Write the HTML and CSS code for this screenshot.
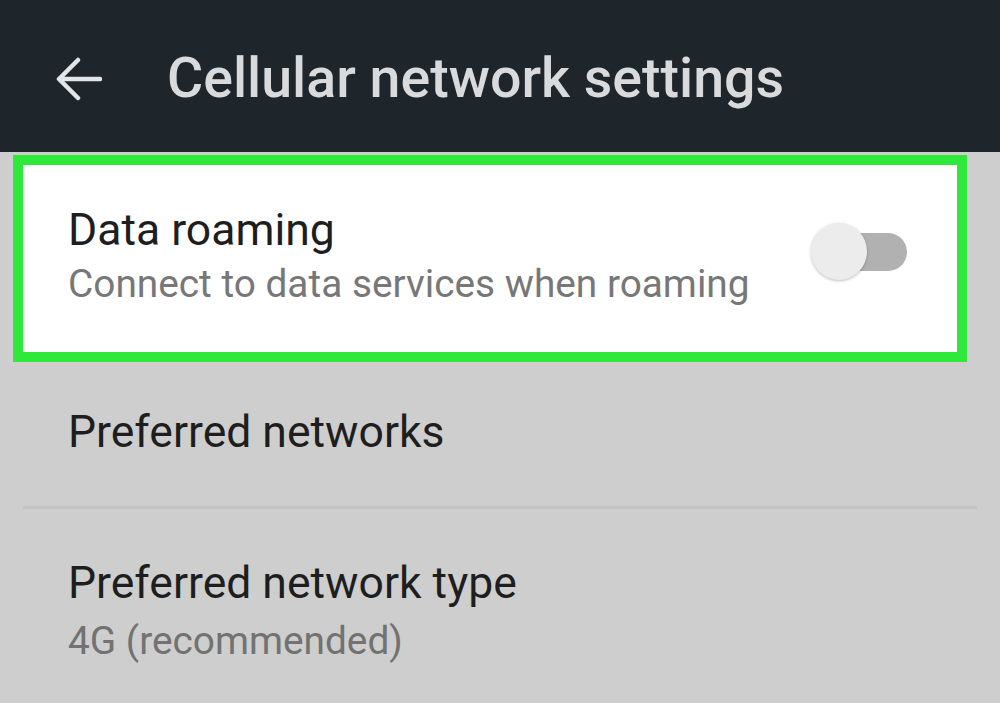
FILE: index.html
```html
<!DOCTYPE html>
<html lang="en">
<head>
<meta charset="utf-8">
<title>Cellular network settings</title>
<link rel="stylesheet" href="styles.css">
</head>
<body>

<div class="toolbar">
  <svg class="back" width="46" height="46" viewBox="0 0 46 46">
    <path d="M44 23H4M22 4L3 23L22 42" fill="none" stroke="#e2e4e5" stroke-width="4.5" stroke-linecap="round" stroke-linejoin="round"/>
  </svg>
  <div class="title">Cellular network settings</div>
</div>

<div class="item item-roaming">
  <div class="texts">
    <div class="label">Data roaming</div>
    <div class="summary">Connect to data services when roaming</div>
  </div>
  <div class="switch">
    <div class="track"></div>
    <div class="thumb"></div>
  </div>
</div>

<div class="item item-networks">
  <div class="label">Preferred networks</div>
</div>
<div class="divider"></div>

<div class="item item-type">
  <div class="label">Preferred network type</div>
  <div class="summary">4G (recommended)</div>
</div>

</body>
</html>
```

FILE: styles.css
```css
body {
  margin: 0;
  background-color: #cecece;
  font-family: Roboto, "Liberation Sans", sans-serif;
  overflow: hidden;
}

/* top bar */
.toolbar {
  height: 152px;
  box-sizing: border-box;
  padding: 6px 0 0 56px;
  background-color: #1f262b;
  display: flex;
  align-items: center;
}
.back {
  margin-right: 65px;
}
.title {
  font-size: 55.5px;
  font-weight: 500;
  line-height: 64px;
  color: #d8dadb;
}

/* rows */
.label {
  font-size: 44.5px;
  line-height: 51px;
  color: #1e1e1e;
}
.summary {
  font-size: 38.8px;
  line-height: 45px;
  color: #727272;
}

.item-roaming {
  margin: 3px 0 0 13px;
  width: 954px;
  box-sizing: border-box;
  border: 10px solid #2ee83a;
  background-color: #ffffff;
  padding: 40px 50px 46px 45px;
  display: flex;
  align-items: center;
  justify-content: space-between;
}
.item-roaming .summary {
  margin-top: 5px;
  color: #777777;
}

.switch {
  position: relative;
  width: 96px;
  height: 59px;
  margin-bottom: 6px;
}
.track {
  position: absolute;
  left: 14px;
  right: 0;
  top: 10px;
  height: 38px;
  border-radius: 19px;
  background-color: #b1b1b1;
}
.thumb {
  position: absolute;
  left: 0;
  top: 0;
  width: 56px;
  height: 57px;
  border-radius: 50%;
  background-color: #ececec;
  box-shadow: 0 1px 3px rgba(0, 0, 0, 0.25);
}

.item-networks {
  padding: 45px 0 48px 68px;
}

.divider {
  margin: 0 23px 0 23px;
  height: 3px;
  background-color: #c3c3c3;
}

.item-type {
  padding: 49px 0 0 68px;
}
.item-type .summary {
  margin-top: 9px;
}
```
